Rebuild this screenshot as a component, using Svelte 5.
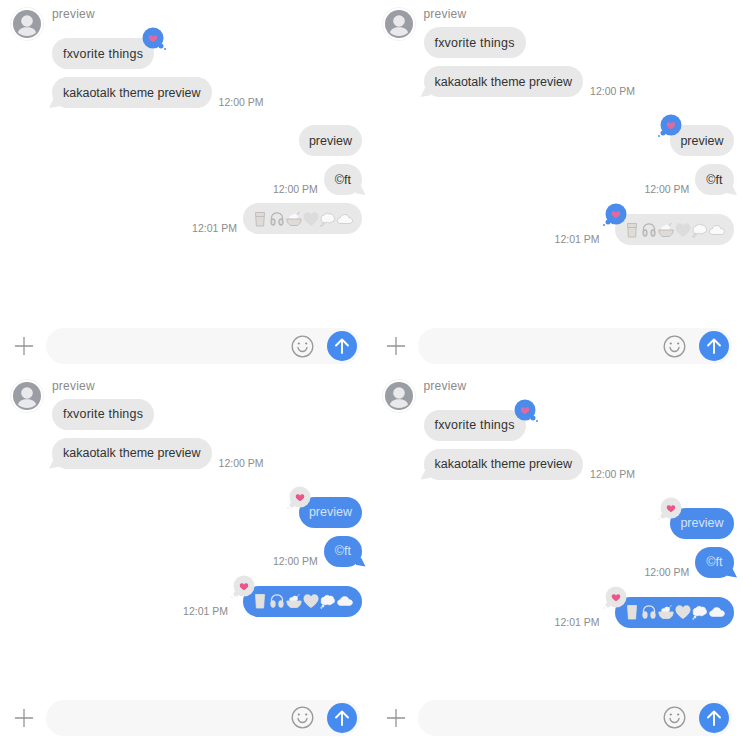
<script>
  // four previews of the same chat, only reaction theme and outgoing colour change
  const panels = [
    { react: { first: true }, badge: 'blue', own: 'grey' },
    { react: { preview: true, icons: true }, badge: 'blue', own: 'grey' },
    { react: { preview: true, icons: true }, badge: 'grey', own: 'blue' },
    { react: { first: true, preview: true, icons: true }, badge: 'mixed', own: 'blue' }
  ];

  function tone(panel, key) {
    if (panel.badge === 'mixed') return key === 'first' ? 'blue' : 'grey';
    return panel.badge;
  }
</script>

{#snippet badge(kind, side)}
  <svg class="badge {side}" width="30" height="30" viewBox="0 0 30 30" aria-hidden="true">
    <circle cx="15" cy="15" r="10.5" class={kind} />
    {#if side === 'right'}
      <circle cx="23" cy="23" r="2.5" class={kind} />
      <circle cx="27" cy="26" r="1" class={kind === 'grey' ? 'faint' : kind} />
    {:else}
      <circle cx="7" cy="23" r="2.5" class={kind} />
      <circle cx="3" cy="26" r="1" class={kind === 'grey' ? 'faint' : kind} />
    {/if}
    <path class="heart" class:dim={kind === 'blue'} d="M15 20c-3.4-2.4-5-4-5-5.800 0-1.500 1.100-2.500 2.400-2.500 1.100 0 2 .6 2.600 1.600.6-1 1.500-1.600 2.600-1.600 1.300 0 2.400 1 2.400 2.500 0 1.800-1.600 3.400-5 5.800z" />
  </svg>
{/snippet}

{#snippet stickers()}
  <span class="stickers">
    <svg width="16" height="16" viewBox="0 0 16 16" aria-hidden="true">
      <path class="glass" d="M3.500 1.500h9l-.9 13.500H4.400z" />
      <path class="ink thin" d="M3.500 1.500h9l-.9 13.500H4.400zM3.800 5.500h8.400" />
    </svg>
    <svg width="16" height="16" viewBox="0 0 16 16" aria-hidden="true">
      <path class="ink" d="M3 10.500C1 6 3.500 1.800 8 1.800s7 4.200 5 8.700" />
      <ellipse class="ink cup" cx="4" cy="11" rx="2" ry="3" />
      <ellipse class="ink cup" cx="12" cy="11" rx="2" ry="3" />
    </svg>
    <svg width="16" height="16" viewBox="0 0 16 16" aria-hidden="true">
      <circle class="puff" cx="5.500" cy="6.500" r="2.200" />
      <circle class="puff" cx="9" cy="5.500" r="2.800" />
      <path class="glass" d="M.8 8h14.400c0 3.400-2 5.600-4 6.500H4.800C2.800 13.600.8 11.400.8 8z" />
      <path class="ink thin" d="M.8 8h14.400c0 3.400-2 5.600-4 6.500H4.800C2.800 13.600.8 11.400.8 8zM11 4l2.500-3" />
    </svg>
    <svg width="16" height="16" viewBox="0 0 16 16" aria-hidden="true">
      <path class="love" d="M8 15C3.300 11.300.5 8.700.5 5.500.5 3 2.400 1.300 4.500 1.300c1.500 0 2.700.8 3.500 2.200.8-1.400 2-2.200 3.500-2.200 2.100 0 4 1.700 4 4.200 0 3.200-2.800 5.800-7.500 9.500z" />
    </svg>
    <svg width="16" height="16" viewBox="0 0 16 16" aria-hidden="true">
      <path class="puff edge" d="M4 11.500C1.800 11.500.6 9.800 1.300 8 .6 6 2.100 4 4 4.300 5 2 8 1.600 9.500 3.200c2-.8 4.200.6 4.200 2.600 1.800 1.500.9 4.500-1.500 4.700-1 1.500-3.700 1.800-4.700.7-1 .5-2.500.8-3.500.3z" />
      <circle class="puff edge" cx="3" cy="13" r="1.100" />
      <circle class="puff edge" cx="1.300" cy="14.800" r=".6" />
    </svg>
    <svg width="16" height="16" viewBox="0 0 16 16" aria-hidden="true">
      <path class="puff edge" d="M3.800 12.500c-2 0-3.300-1.300-3.300-2.900 0-1.500 1.100-2.700 2.800-2.800C3.800 4.800 5.700 3.500 7.700 3.500c2 0 3.700 1.300 4.200 3.100 2 0 3.600 1.300 3.600 3 0 1.600-1.400 2.900-3.300 2.900z" />
    </svg>
  </span>
{/snippet}

<main class="sheet">
  {#each panels as panel}
    <section class="panel">
      <div class="thread">
        <div class="incoming">
          <div class="avatar">
            <svg width="28" height="28" viewBox="0 0 28 28" aria-hidden="true">
              <circle cx="14" cy="14" r="14" fill="#9b9da5" />
              <circle cx="14" cy="11" r="5.800" fill="#e9e9ec" />
              <path d="M5 22.500c1-3.800 4.500-5.300 9-5.300s8 1.500 9 5.300c-2 2.300-5.300 3.500-9 3.500s-7-1.200-9-3.500z" fill="#e9e9ec" />
            </svg>
          </div>
          <div class="stack">
            <span class="name">preview</span>
            <div class="row" class:lifted={panel.react.first}>
              <div class="bubble wide">
                fxvorite things
                {#if panel.react.first}{@render badge(tone(panel, 'first'), 'right')}{/if}
              </div>
            </div>
            <div class="row">
              <div class="bubble tail-left">kakaotalk theme preview</div>
              <time>12:00 PM</time>
            </div>
          </div>
        </div>

        <div class="outgoing">
          <div class="row end first-own" class:lifted={panel.react.preview}>
            <div class="bubble short {panel.own}" class:marked={panel.react.preview}>
              preview
              {#if panel.react.preview}{@render badge(tone(panel, 'preview'), 'left')}{/if}
            </div>
          </div>
          <div class="row end">
            <time>12:00 PM</time>
            <div class="bubble tail-right {panel.own}">©ft</div>
          </div>
          <div class="row end" class:lifted={panel.react.icons}>
            <time>12:01 PM</time>
            <div class="bubble tight {panel.own}" class:marked={panel.react.icons}>
              {@render stickers()}
              {#if panel.react.icons}{@render badge(tone(panel, 'icons'), 'left')}{/if}
            </div>
          </div>
        </div>
      </div>

      <div class="composer">
        <svg class="plus" width="20" height="20" viewBox="0 0 20 20" aria-hidden="true">
          <path d="M10 1v18M1 10h18" fill="none" stroke="#949494" stroke-width="1.300" />
        </svg>
        <div class="field">
          <svg width="23" height="23" viewBox="0 0 23 23" aria-hidden="true">
            <circle cx="11.500" cy="11.500" r="10.300" fill="none" stroke="#999" stroke-width="1.300" />
            <circle cx="7.800" cy="8.500" r="1.100" fill="#8e8e8e" />
            <circle cx="15.200" cy="8.500" r="1.100" fill="#8e8e8e" />
            <path d="M7 12.500c.7 2.700 2.500 4 4.500 4s3.800-1.300 4.500-4" fill="none" stroke="#999" stroke-width="1.300" stroke-linecap="round" />
          </svg>
          <button class="send" aria-label="Send">
            <svg width="18" height="18" viewBox="0 0 18 18" aria-hidden="true">
              <path d="M9 16V2.500M3 8.500l6-6 6 6" fill="none" stroke="#fff" stroke-width="1.900" stroke-linecap="round" stroke-linejoin="round" />
            </svg>
          </button>
        </div>
      </div>
    </section>
  {/each}
</main>

<style>
  :global(body) {
    background: #fff;
  }

  .sheet {
    display: grid;
    grid-template-columns: 371.5px 371.5px;
    grid-template-rows: 371.5px 371.5px;
    width: 743px;
    height: 743px;
    overflow: hidden;
    font-family: "Liberation Sans", Arial, sans-serif;
    color: #333;
  }

  .panel {
    display: flex;
    flex-direction: column;
    min-width: 0;
  }

  .thread {
    flex: 1;
    padding: 7px 9.5px 0 10px;
  }

  .incoming {
    display: flex;
    gap: 8px;
  }

  .avatar {
    display: flex;
    align-items: center;
    justify-content: center;
    flex: none;
    width: 34px;
    height: 34px;
    border: 1px solid #f3f3f3;
    border-radius: 50%;
    box-sizing: border-box;
  }

  .stack {
    flex: 1;
    display: flex;
    flex-direction: column;
    gap: 8px;
  }

  .name {
    height: 12px;
    font-size: 12px;
    line-height: 14px;
    letter-spacing: 0.2px;
    color: #8a8a8a;
  }

  .row {
    display: flex;
    align-items: flex-end;
    gap: 7px;
  }

  .row.end {
    justify-content: flex-end;
    gap: 6px;
    margin-top: 8px;
  }

  .row.first-own {
    margin-top: 17px;
  }

  .row.lifted {
    padding-top: 11px;
  }

  .bubble {
    position: relative;
    flex: none;
    display: flex;
    align-items: center;
    height: 31px;
    padding: 0 11px;
    border-radius: 15.5px;
    box-sizing: border-box;
    background: #e8e8e8;
    font-size: 12.5px;
    color: #333;
    --glass: #dfdbd6;
    --ink: #b6b6b6;
    --love: #dcdcdc;
    --puff: #fafafa;
    --edge: #b0b0b0;
  }

  .bubble.blue {
    background: #4a8bec;
    color: #d5e4fa;
    --glass: #e4e1dc;
    --ink: #e2e2e2;
    --love: #e0e0e0;
    --puff: #f6f6f6;
    --edge: #ffffff;
  }

  .bubble.wide {
    letter-spacing: 0.2px;
  }

  .bubble.short {
    padding: 0 10px;
  }

  .bubble.marked {
    margin-left: 9px;
  }

  .bubble.tight {
    padding: 0 9px;
  }

  .tail-left::after,
  .tail-right::after {
    content: "";
    position: absolute;
    bottom: 0;
    width: 10px;
    height: 9px;
    background: inherit;
  }

  .tail-left::after {
    left: -3px;
    clip-path: polygon(0 100%, 45% 0, 100% 0, 100% 80%, 45% 92%);
  }

  .tail-right::after {
    right: -3.5px;
    clip-path: polygon(100% 100%, 55% 0, 0 0, 0 80%, 55% 92%);
  }

  time {
    font-size: 10.5px;
    line-height: 12px;
    color: #8c8c8c;
  }

  .stickers {
    display: flex;
    gap: 1px;
  }

  .glass {
    fill: var(--glass);
  }

  .ink {
    fill: none;
    stroke: var(--ink);
    stroke-width: 1.3;
  }

  .ink.thin {
    stroke-width: 0.8;
  }

  .ink.cup {
    fill: var(--glass);
  }

  .love {
    fill: var(--love);
  }

  .puff {
    fill: var(--puff);
  }

  .puff.edge {
    stroke: var(--edge);
    stroke-width: 0.5;
  }

  .badge {
    position: absolute;
    top: -15px;
  }

  .badge.right {
    right: -14px;
  }

  .badge.left {
    left: -14px;
  }

  .badge .blue {
    fill: #4a8bec;
  }

  .badge .grey {
    fill: #e6e6e6;
  }

  .badge .faint {
    fill: #efefef;
  }

  .heart {
    fill: #e8568a;
    transform-origin: 15px 15.5px;
    transform: scale(0.85);
  }

  .heart.dim {
    fill: #e06aa0;
  }

  .composer {
    display: flex;
    align-items: center;
    gap: 12px;
    height: 36px;
    margin-bottom: 7.5px;
    padding: 0 11.5px 0 14px;
  }

  .plus {
    flex: none;
  }

  .field {
    flex: 1;
    display: flex;
    align-items: center;
    justify-content: flex-end;
    gap: 13px;
    height: 36px;
    padding-right: 3px;
    border-radius: 18px;
    background: #f7f7f7;
  }

  .send {
    display: flex;
    align-items: center;
    justify-content: center;
    width: 30px;
    height: 30px;
    padding: 0;
    border: none;
    border-radius: 50%;
    background: #468bf0;
  }
</style>
